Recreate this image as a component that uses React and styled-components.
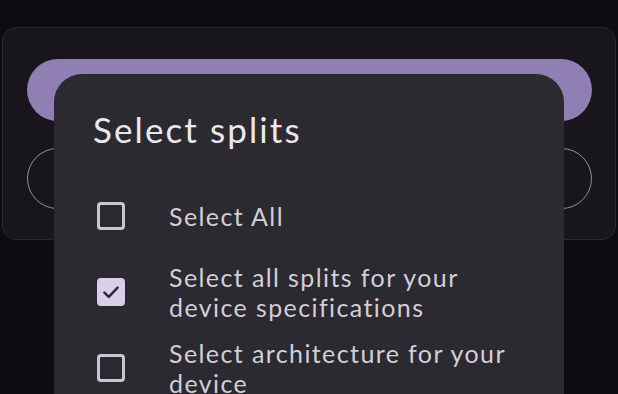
import React from 'react';
import styled, { createGlobalStyle } from 'styled-components';

const GlobalStyle = createGlobalStyle`
  html, body {
    margin: 0;
    padding: 0;
    background: #0e0c11;
    overflow: hidden;
  }
  body {
    font-family: 'Lato', 'Noto Sans', sans-serif;
  }
`;

const Screen = styled.div`
  position: relative;
  width: 618px;
  height: 394px;
  padding-top: 27px;
  box-sizing: border-box;
  overflow: hidden;
`;

const Card = styled.section`
  margin-left: 2px;
  width: 614px;
  height: 213px;
  box-sizing: border-box;
  padding: 31px 23px 0 24px;
  background: #18161c;
  border: 1px solid #2a2730;
  border-radius: 14px;
  display: flex;
  flex-direction: column;
  gap: 27px;
`;

const PillButton = styled.div`
  height: ${(p) => (p.$outlined ? '61px' : '62px')};
  border-radius: 31px;
  box-sizing: border-box;
  background: ${(p) => (p.$outlined ? 'transparent' : '#8f7fb3')};
  border: ${(p) => (p.$outlined ? '1.5px solid #938f99' : 'none')};
`;

const Dialog = styled.div`
  position: absolute;
  left: 54px;
  top: 74px;
  width: 510px;
  height: 360px;
  box-sizing: border-box;
  padding: 34px 0 0 39px;
  background: #2b2a30;
  border-radius: 28px;
`;

const Title = styled.h2`
  margin: 0 0 28px;
  font-size: 35px;
  line-height: 42px;
  font-weight: 400;
  letter-spacing: 2.1px;
  color: #ebe7ee;
`;

const List = styled.div`
  display: flex;
  flex-direction: column;
`;

const Row = styled.div`
  display: flex;
  align-items: center;
  gap: 44px;
  min-height: 76px;
  padding-left: 4px;
`;

const Box = styled.span`
  flex: 0 0 auto;
  width: 28px;
  height: 28px;
  box-sizing: border-box;
  border-radius: 4px;
  border: ${(p) => (p.$checked ? 'none' : '3px solid #cbc5d3')};
  background: ${(p) => (p.$checked ? '#d8cfe8' : 'transparent')};
  display: flex;
  align-items: center;
  justify-content: center;
`;

const Label = styled.span`
  font-size: 25px;
  line-height: 30px;
  color: #d3ced9;
  letter-spacing: 1.4px;
  max-width: 355px;
`;

const items = [
  { label: 'Select All', checked: false },
  { label: 'Select all splits for your device specifications', checked: true },
  { label: 'Select architecture for your device', checked: false },
];

export default function App() {
  return (
    <>
      <GlobalStyle />
      <Screen>
        <Card>
          <PillButton />
          <PillButton $outlined />
        </Card>
        <Dialog>
          <Title>Select splits</Title>
          <List>
            {items.map((item) => (
              <Row key={item.label}>
                <Box $checked={item.checked}>
                  {item.checked && (
                    <svg width="22" height="22" viewBox="0 0 20 20">
                      <path d="M4 10.5l4 4 8-8.5" fill="none" stroke="#2b2a30" strokeWidth="2.2" strokeLinecap="round" strokeLinejoin="round" />
                    </svg>
                  )}
                </Box>
                <Label>{item.label}</Label>
              </Row>
            ))}
          </List>
        </Dialog>
      </Screen>
    </>
  );
}
